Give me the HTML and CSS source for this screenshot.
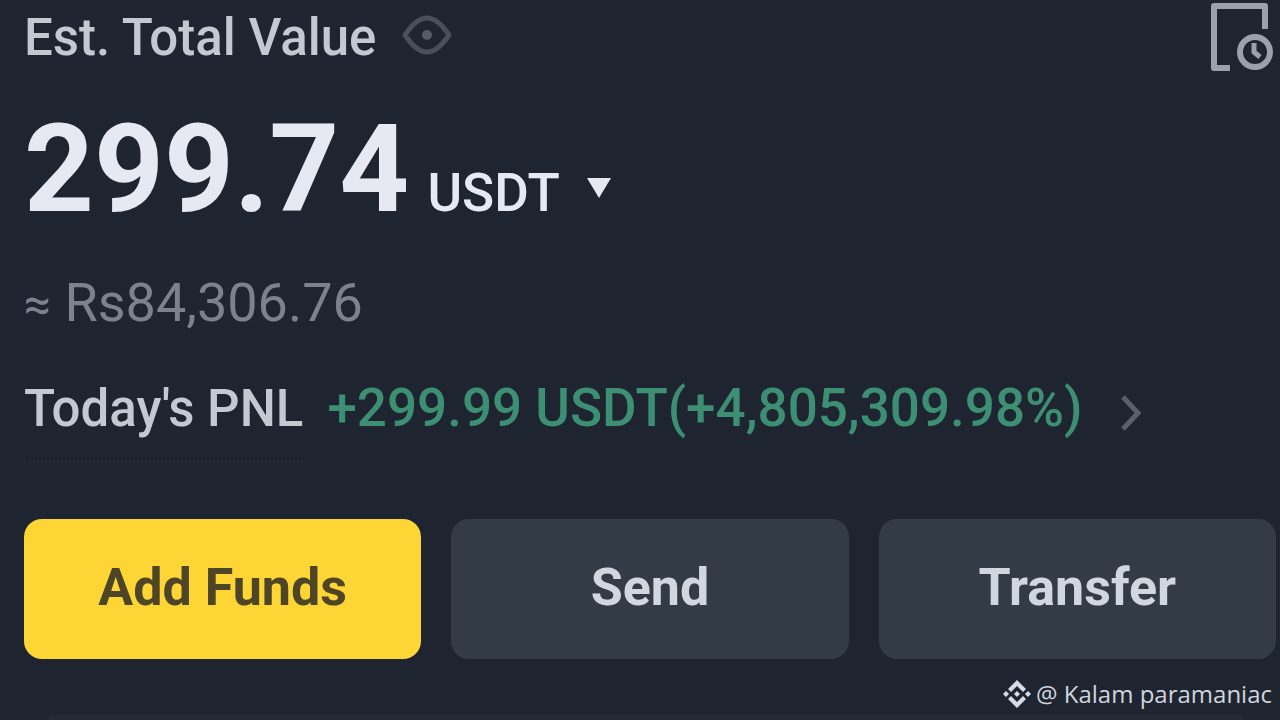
FILE: index.html
```html
<!DOCTYPE html>
<html lang="en">
<head>
    <meta charset="UTF-8">
    <meta name="viewport" content="width=device-width, initial-scale=1.0">
    <title>Wallet Overview</title>
    <link rel="stylesheet" href="styles.css">
</head>
<body>

    <main class="wallet">
        <div class="top-row">
            <h1>Est. Total Value</h1>
            <button class="icon-btn eye-btn" aria-label="Hide balance">
                <svg width="52" height="42" viewBox="0 0 52 42" fill="none" stroke="#474f5a" stroke-width="5" stroke-linejoin="round">
                    <path d="M4 20C10 11 17 3 26 3s16 8 22 17c-6 9-13 17-22 17S10 29 4 20z"/>
                    <circle cx="26" cy="20" r="5" fill="#545c67" stroke="none"/>
                </svg>
            </button>
            <button class="icon-btn history-btn" aria-label="History">
                <svg width="66" height="72" viewBox="0 0 66 72" fill="none" stroke="#9aa1ac" stroke-width="6">
                    <path d="M20 68H4V6h51v23" stroke-linejoin="round"/>
                    <circle cx="45" cy="52" r="15"/>
                    <path d="M44 43v9l6 5" stroke-width="5"/>
                </svg>
            </button>
        </div>

        <div class="balance">
            <span class="amount">299.74</span>
            <button class="currency">
                USDT
                <svg width="26" height="30" viewBox="0 0 26 30" fill="#e6e9f1">
                    <path d="M1 0h24L13 20z"/>
                </svg>
            </button>
        </div>

        <p class="fiat"><span class="approx">≈</span> Rs84,306.76</p>

        <a class="pnl" href="#pnl">
            <span class="pnl-label">Today's PNL</span>
            <span class="pnl-value">+299.99 USDT(+4,805,309.98%)</span>
            <svg class="chevron" width="24" height="40" viewBox="0 0 24 40" fill="none" stroke="#59606b" stroke-width="5">
                <path d="M4 4l15 16L4 36"/>
            </svg>
        </a>

        <div class="actions">
            <button class="primary">Add Funds</button>
            <button>Send</button>
            <button>Transfer</button>
        </div>

        <div class="next-card"></div>
    </main>

    <div class="watermark">
        <svg width="28" height="28" viewBox="0 0 28 28" fill="#d7dbe3">
            <path d="M14 0l9 9-3 3-6-6-6 6-3-3z"/>
            <path d="M14 28l9-9-3-3-6 6-6-6-3 3z"/>
            <path d="M3 11l3 3-3 3-3-3z"/>
            <path d="M25 11l3 3-3 3-3-3z"/>
            <path d="M14 11l3 3-3 3-3-3z"/>
        </svg>
        <span>@ Kalam paramaniac</span>
    </div>

</body>
</html>
```
FILE: styles.css
```css
* {
    box-sizing: border-box;
}
body {
    margin: 0;
    background: #1e2530;
    color: #c3c8d1;
    font-family: Roboto, Arial, sans-serif;
    font-size: 52px;
}
h1, p {
    margin: 0;
}
button {
    margin: 0;
    padding: 0;
    border: none;
    background: none;
    color: inherit;
    font-family: inherit;
    cursor: pointer;
}
svg {
    display: block;
    flex: none;
}
.wallet {
    padding: 0 4px 0 24px;
}
.top-row {
    display: flex;
    align-items: center;
    height: 72px;
}
h1 {
    padding-top: 4px;
    font-size: 51px;
    font-weight: 500;
    line-height: 72px;
}
.eye-btn {
    margin-left: 25px;
}
.history-btn {
    margin-left: auto;
}
.balance {
    display: flex;
    align-items: baseline;
    gap: 18px;
    margin-top: 26px;
    line-height: 144px;
    color: #e6e9f1;
}
.amount {
    font-size: 122px;
    font-weight: 700;
}
.currency {
    display: flex;
    align-items: center;
    gap: 26px;
    font-size: 53px;
    font-weight: 500;
}
.fiat {
    margin-top: 25px;
    color: #7b828d;
    font-size: 54px;
    line-height: 72px;
}
.approx {
    font-size: 48px;
}
.pnl {
    display: flex;
    align-items: center;
    margin-top: 31px;
    color: inherit;
    font-size: 53px;
    line-height: 72px;
    text-decoration: none;
}
.pnl-label {
    padding-bottom: 16px;
    border-bottom: 2px dotted #252c37;
    font-size: 51px;
    font-weight: 500;
}
.pnl-value {
    margin: 0 36px 20px 24px;
    color: #3d8f73;
    font-weight: 500;
}
.chevron {
    margin-bottom: 10px;
}
.actions {
    display: grid;
    grid-template-columns: repeat(3, 1fr);
    gap: 30px;
    margin-top: 55px;
}
.actions button {
    height: 140px;
    padding-bottom: 4px;
    border-radius: 18px;
    background: #333c46;
    color: #d2d6de;
    font-size: 52px;
    font-weight: 700;
}
.actions .primary {
    background: #fdd535;
    color: #4d4526;
}
.next-card {
    height: 5px;
    margin: 56px 32px 0 24px;
    border-radius: 18px 18px 0 0;
    background: #242b36;
}
.watermark {
    position: absolute;
    right: 8px;
    bottom: 8px;
    display: flex;
    align-items: center;
    gap: 5px;
    color: #d0d4dc;
    font-family: "Open Sans", sans-serif;
    font-size: 24px;
    line-height: 36px;
}
```
